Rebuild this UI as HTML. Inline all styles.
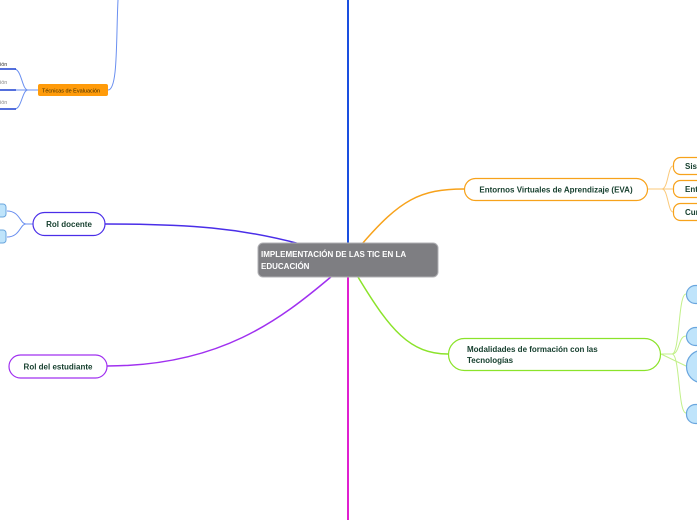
<!DOCTYPE html>
<html><head><meta charset="utf-8"><style>
html,body{margin:0;padding:0;background:#fff;width:697px;height:520px;overflow:hidden}
svg{display:block}
text{font-family:"Liberation Sans","DejaVu Sans",sans-serif}
</style></head><body>
<svg width="697" height="520" viewBox="0 0 697 520" xmlns="http://www.w3.org/2000/svg">
<!-- connectors -->
<line x1="348" y1="0" x2="348" y2="245" stroke="#1a4fe0" stroke-width="2"/>
<line x1="348" y1="276" x2="348" y2="520" stroke="#e020d0" stroke-width="2"/>
<path d="M105 224 C190 224 240 228 300 244" stroke="#4a2ee8" stroke-width="1.5" fill="none"/>
<path d="M107 366 C220 366 280 320 332 276" stroke="#a030f0" stroke-width="1.5" fill="none"/>
<path d="M362 244 C400 200 420 189 464 189" stroke="#f7a21b" stroke-width="1.5" fill="none"/>
<path d="M358 277 C390 330 410 354 448 354" stroke="#8be32a" stroke-width="1.5" fill="none"/>
<!-- EVA children -->
<g stroke="#fbc97a" stroke-width="1" fill="none">
<path d="M648 189 L662 189 C668 189 668 166 673 166"/>
<path d="M648 189 L673 189"/>
<path d="M648 189 L662 189 C668 189 668 212 673 212"/>
</g>
<!-- Modalidades children -->
<g stroke="#c2f08a" stroke-width="1" fill="none">
<path d="M661 354 L672 354 C680 354 678 294 686 294"/>
<path d="M661 354 L672 354 C680 354 678 336 686 336"/>
<path d="M661 354 L686 366"/>
<path d="M661 354 L672 354 C680 354 678 413 686 413"/>
</g>
<!-- top-left blue -->
<g stroke="#6a8ff0" stroke-width="1" fill="none">
<path d="M108 90 C118 90 116 40 118 0"/>
<path d="M38 90 L28 90 C22 90 22 71 15 69 L0 69"/>
<path d="M38 90 L0 90"/>
<path d="M38 90 L28 90 C22 90 22 108 15 109 L0 109"/>
<path d="M33 224 L26 224 C20 224 20 211 7 211"/>
<path d="M33 224 L26 224 C20 224 20 237 7 237"/>
</g>
<g stroke="#1a3fd0" stroke-width="1.5">
<line x1="0" y1="69" x2="16" y2="69"/><line x1="0" y1="90" x2="16" y2="90"/><line x1="0" y1="109" x2="16" y2="109"/>
</g>
<text x="0" y="66" font-size="5.5" fill="#333">ión</text>
<text x="0" y="84" font-size="5.5" fill="#888">ión</text>
<text x="0" y="104" font-size="5.5" fill="#888">ión</text>
<rect x="38" y="84" width="70" height="12" rx="2" fill="#ff9b0a"/>
<text x="42" y="92.5" font-size="5.5" fill="#3a2a00">Técnicas de Evaluación</text>
<!-- small blue left -->
<rect x="-6" y="204" width="12" height="13" rx="3" fill="#bfe4fb" stroke="#6aa6de"/>
<rect x="-6" y="230" width="12" height="13" rx="3" fill="#bfe4fb" stroke="#6aa6de"/>
<!-- central -->
<rect x="258" y="243" width="180" height="34" rx="5" fill="#7e7e82" stroke="#b0b0b4"/>
<text x="261" y="257" font-size="8" font-weight="bold" fill="#fff">IMPLEMENTACIÓN DE LAS TIC EN LA</text>
<text x="261" y="269" font-size="8" font-weight="bold" fill="#fff">EDUCACIÓN</text>
<!-- Rol docente -->
<rect x="33" y="212.5" width="72" height="23" rx="11.5" fill="#fff" stroke="#4a2ee8" stroke-width="1.2"/>
<text x="69" y="227" font-size="8" font-weight="bold" fill="#17402f" text-anchor="middle">Rol docente</text>
<!-- Rol del estudiante -->
<rect x="9" y="355" width="98" height="23" rx="11.5" fill="#fff" stroke="#a030f0" stroke-width="1.2"/>
<text x="58" y="369.5" font-size="8" font-weight="bold" fill="#17402f" text-anchor="middle">Rol del estudiante</text>
<!-- EVA -->
<rect x="464.5" y="178.5" width="183" height="22" rx="11" fill="#fff" stroke="#f7a21b" stroke-width="1.2"/>
<text x="556" y="192.5" font-size="8" font-weight="bold" fill="#17402f" text-anchor="middle">Entornos Virtuales de Aprendizaje (EVA)</text>
<!-- Modalidades -->
<rect x="448.5" y="338.5" width="212" height="32" rx="16" fill="#fff" stroke="#8be32a" stroke-width="1.2"/>
<text x="467" y="352" font-size="8" font-weight="bold" fill="#17402f">Modalidades de formación con las</text>
<text x="467" y="363" font-size="8" font-weight="bold" fill="#17402f">Tecnologías</text>
<!-- EVA children nodes -->
<g fill="#fff" stroke="#f7a21b" stroke-width="1.2">
<rect x="673.5" y="157.5" width="40" height="17" rx="7"/>
<rect x="673.5" y="180.5" width="40" height="17" rx="7"/>
<rect x="673.5" y="203.5" width="40" height="17" rx="7"/>
</g>
<g font-size="8" font-weight="bold" fill="#17402f">
<text x="685" y="169">Sis</text><text x="685" y="192">Ent</text><text x="685" y="215">Cur</text>
</g>
<!-- blue nodes right -->
<g fill="#bfe4fb" stroke="#6aa6de" stroke-width="1.2">
<rect x="686.5" y="285.5" width="30" height="18" rx="9"/>
<rect x="686.5" y="327.5" width="30" height="18" rx="9"/>
<rect x="686.5" y="350.5" width="30" height="32" rx="16"/>
<rect x="686.5" y="404.5" width="30" height="19" rx="9"/>
</g>
</svg>
</body></html>
